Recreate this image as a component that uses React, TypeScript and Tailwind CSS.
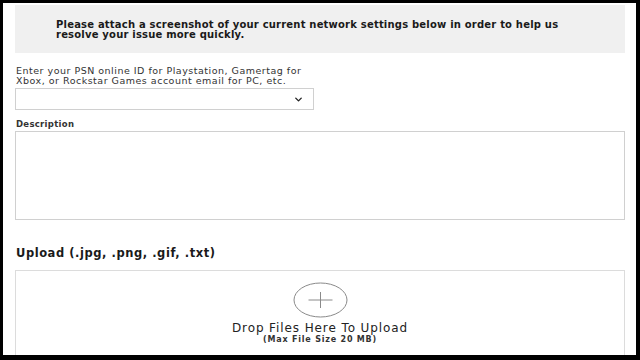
import { ChevronDown } from 'lucide-react';

export default function App() {
  return (
    <div
      className="w-[640px] h-[360px] bg-black pt-[3px] pl-[3px] pr-[4px] pb-[5px]"
      style={{ fontFamily: '"DejaVu Sans", "Liberation Sans", Arial, sans-serif' }}
    >
      <div className="h-full bg-white overflow-hidden pl-[12px] pr-[11px] pt-[2px]">
        <div className="h-[48px] bg-[#f0f0f0] pl-[41px] pt-[15px] text-[10px] leading-[10px] font-bold text-[#1a1a1a] tracking-[0.2px]">
          <p>Please attach a screenshot of your current network settings below in order to help us</p>
          <p>resolve your issue more quickly.</p>
        </div>

        <div className="mt-[13px] pl-[1px] text-[9.5px] leading-[10px] text-[#333] tracking-[0.5px]">
          <p>Enter your PSN online ID for Playstation, Gamertag for</p>
          <p>Xbox, or Rockstar Games account email for PC, etc.</p>
        </div>
        <div className="mt-[2px] w-[299px] h-[22px] border border-[#d0d0d0] flex items-center justify-end pr-[9px]">
          <ChevronDown className="w-[11px] h-[11px] text-[#222]" strokeWidth={3} />
        </div>

        <p className="mt-[10px] pl-[1px] text-[8.5px] leading-[9px] font-bold text-[#333] tracking-[0.3px]">Description</p>
        <div className="mt-[2px] h-[89px] border border-[#d0d0d0]"></div>

        <p className="mt-[27px] pl-[1px] text-[11.5px] leading-[12px] font-bold text-[#1a1a1a] tracking-[0.55px]">
          Upload (.jpg, .png, .gif, .txt)
        </p>
        <div className="mt-[11px] h-[100px] border border-[#dcdcdc] flex flex-col items-center pt-[11px]">
          <svg width="55" height="36" viewBox="0 0 55 36" className="text-[#8a8a8a]">
            <ellipse cx="27.5" cy="18" rx="26.5" ry="17" fill="none" stroke="currentColor" strokeWidth="1" />
            <path d="M15.5 18 H39.5 M27.5 10 V26" stroke="currentColor" strokeWidth="1" />
          </svg>
          <p className="mt-[4px] text-[12px] leading-[12px] text-[#222] tracking-[0.9px]">Drop Files Here To Upload</p>
          <p className="mt-[1px] text-[8px] leading-[9px] font-bold text-[#333] tracking-[0.8px]">(Max File Size 20 MB)</p>
        </div>
      </div>
    </div>
  );
}
